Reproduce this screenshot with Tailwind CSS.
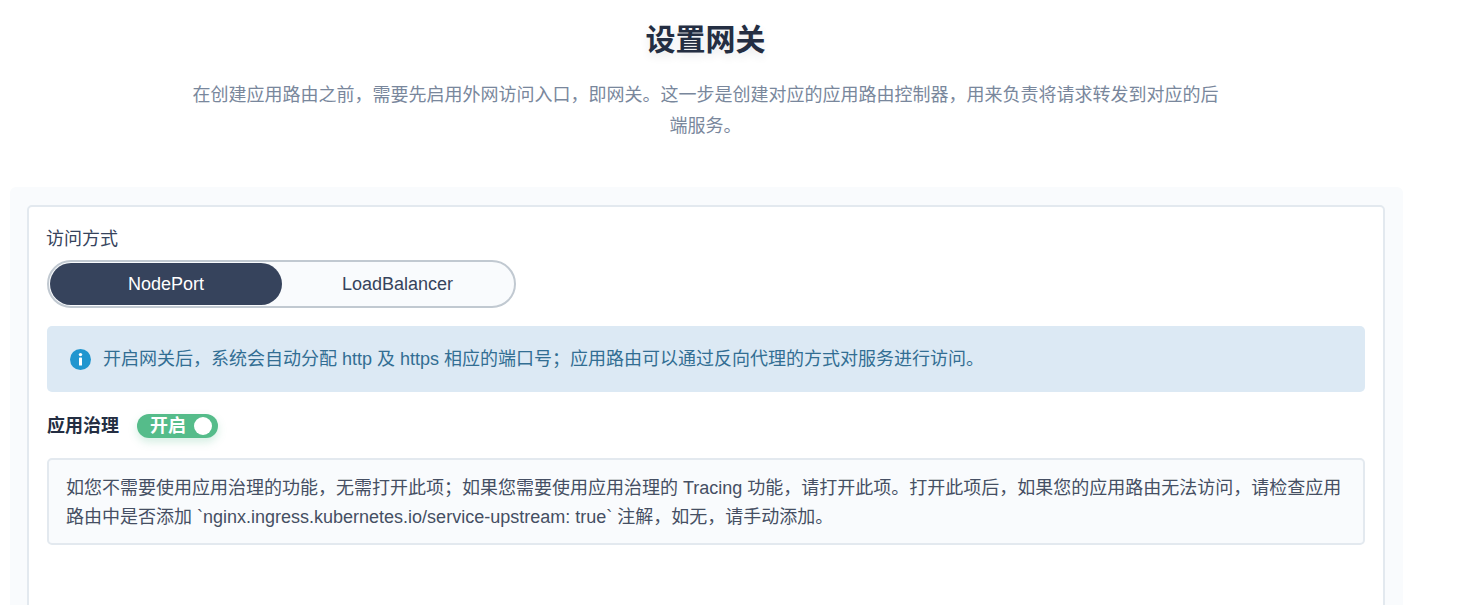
<!DOCTYPE html>
<html lang="zh-CN">
<head>
  <meta charset="UTF-8" />
  <title>设置网关</title>
  <script src="https://cdn.jsdelivr.net/npm/@tailwindcss/browser@4"></script>
</head>
<body class="bg-white h-[605px] overflow-hidden font-['Liberation_Sans','Noto_Sans_CJK_SC',sans-serif] text-[#36435c]">
  <header class="w-[1411px] flex flex-col items-center">
    <h1 class="mt-[20px] h-[40px] leading-[40px] text-[30px] font-bold text-[#242e42] [text-shadow:0_4px_8px_rgba(36,46,66,0.1)]">设置网关</h1>
    <p class="mt-[20px] w-[1040px] text-center text-[18px] leading-[31px] text-[#79879c]">在创建应用路由之前，需要先启用外网访问入口，即网关。这一步是创建对应的应用路由控制器，用来负责将请求转发到对应的后端服务。</p>
  </header>

  <main class="mt-[45px] ml-[10px] w-[1393px] h-[418px] overflow-hidden bg-[#f9fbfd] rounded-t-[6px] px-[17px] pt-[18px]">
    <div class="h-[480px] w-[1358px] bg-white border-2 border-[#e3e9ef] rounded-[5px] px-[18px] pt-[19px]">
      <label class="block -ml-[1px] text-[18px] leading-[26px]">访问方式</label>

      <div class="mt-[8px] w-[469px] h-[48px] flex p-[1px] bg-[#f9fbfd] border-2 border-[#c1c9d1] rounded-full text-[18px]">
        <div class="w-[232px] flex items-center justify-center rounded-full bg-[#36435c] text-white">NodePort</div>
        <div class="flex-1 flex items-center justify-center text-[#36435c]">LoadBalancer</div>
      </div>

      <div class="mt-[18px] h-[66px] flex items-center gap-[12px] px-[23px] bg-[#dce9f4] rounded-[5px] text-[18px] text-[#326e93]">
        <svg class="w-[21px] h-[21px] shrink-0" viewBox="0 0 21 21">
          <circle cx="10.5" cy="10.5" r="10.5" fill="#2196cf" />
          <circle cx="10.5" cy="5.6" r="1.7" fill="#fff" />
          <rect x="9" y="8.6" width="3" height="8" rx="0.6" fill="#fff" />
        </svg>
        <span>开启网关后，系统会自动分配 http 及 https 相应的端口号；应用路由可以通过反向代理的方式对服务进行访问。</span>
      </div>

      <div class="mt-[22px] h-[24px] flex items-center gap-[18px]">
        <span class="text-[18px] font-bold text-[#242e42]">应用治理</span>
        <div class="w-[81px] h-[24px] flex items-center justify-between pl-[13px] pr-[6px] rounded-full bg-[#55bc8a] shadow-[0_4px_8px_rgba(85,188,138,0.25)]">
          <span class="text-[18px] font-bold leading-none text-white">开启</span>
          <span class="w-[18px] h-[18px] rounded-full bg-white"></span>
        </div>
      </div>

      <div class="mt-[20px] h-[87px] px-[17px] pt-[14px] bg-[#f9fbfd] border-2 border-[#e3e9ef] rounded-[5px] text-[18px] leading-[29px] text-[#454f63]">
        如您不需要使用应用治理的功能，无需打开此项；如果您需要使用应用治理的 Tracing 功能，请打开此项。打开此项后，如果您的应用路由无法访问，请检查应用路由中是否添加 `nginx.ingress.kubernetes.io/service-upstream: true` 注解，如无，请手动添加。
      </div>
    </div>
  </main>
</body>
</html>
